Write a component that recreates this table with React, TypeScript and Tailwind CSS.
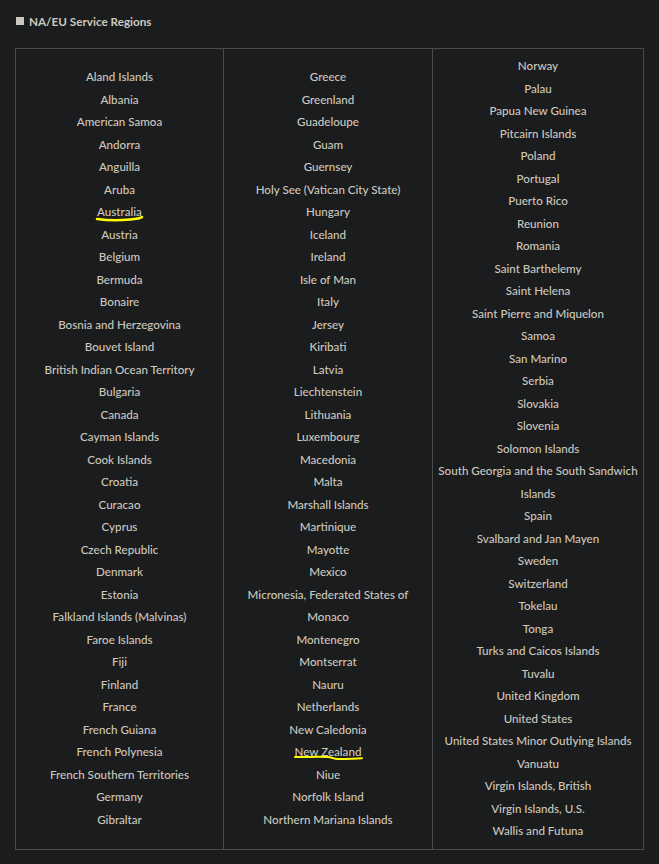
import React from "react";

const col1 = [
  "Aland Islands","Albania","American Samoa","Andorra","Anguilla","Aruba","Australia","Austria","Belgium","Bermuda","Bonaire","Bosnia and Herzegovina","Bouvet Island","British Indian Ocean Territory","Bulgaria","Canada","Cayman Islands","Cook Islands","Croatia","Curacao","Cyprus","Czech Republic","Denmark","Estonia","Falkland Islands (Malvinas)","Faroe Islands","Fiji","Finland","France","French Guiana","French Polynesia","French Southern Territories","Germany","Gibraltar",
];
const col2 = [
  "Greece","Greenland","Guadeloupe","Guam","Guernsey","Holy See (Vatican City State)","Hungary","Iceland","Ireland","Isle of Man","Italy","Jersey","Kiribati","Latvia","Liechtenstein","Lithuania","Luxembourg","Macedonia","Malta","Marshall Islands","Martinique","Mayotte","Mexico","Micronesia, Federated States of Monaco","Montenegro","Montserrat","Nauru","Netherlands","New Caledonia","New Zealand","Niue","Norfolk Island","Northern Mariana Islands",
];
const col3 = [
  "Norway","Palau","Papua New Guinea","Pitcairn Islands","Poland","Portugal","Puerto Rico","Reunion","Romania","Saint Barthelemy","Saint Helena","Saint Pierre and Miquelon","Samoa","San Marino","Serbia","Slovakia","Slovenia","Solomon Islands","South Georgia and the South Sandwich Islands","Spain","Svalbard and Jan Mayen","Sweden","Switzerland","Tokelau","Tonga","Turks and Caicos Islands","Tuvalu","United Kingdom","United States","United States Minor Outlying Islands","Vanuatu","Virgin Islands, British","Virgin Islands, U.S.","Wallis and Futuna",
];

function Item({ name }: { name: string }) {
  if (name === "Australia") {
    return (
      <div className="flex justify-center">
        <span className="relative">
          {name}
          <svg className="absolute left-[-1px] top-[15px] overflow-visible" width="50" height="6" viewBox="0 0 50 6">
            <path d="M1 3 C 12 4.5, 24 4.5, 34 3.5 C 40 3, 44 2.5, 46 1" stroke="#ffff00" strokeWidth="2.6" fill="none" strokeLinecap="round" />
          </svg>
        </span>
      </div>
    );
  }
  if (name === "New Zealand") {
    return (
      <div className="flex justify-center">
        <span className="relative">
          {name}
          <svg className="absolute left-[-1px] top-[14px] overflow-visible" width="72" height="6" viewBox="0 0 72 6">
            <path d="M1 2 C 14 2, 28 1.5, 34 2 C 38 2.5, 40 4, 44 4 C 54 4, 62 3.8, 68 3.2" stroke="#ffff00" strokeWidth="2" fill="none" strokeLinecap="round" />
          </svg>
        </span>
      </div>
    );
  }
  return <div>{name}</div>;
}

function Column({ items, className }: { items: string[]; className: string }) {
  return (
    <div className={`flex flex-col justify-center py-[6px] text-center ${className}`}>
      {items.map((n) => (
        <Item key={n} name={n} />
      ))}
    </div>
  );
}

export default function App() {
  return (
    <div
      className="min-h-screen bg-[#1b1c1e] text-[#cdc8bd] pt-[12px]"
      style={{ fontFamily: "'Lato', 'Open Sans', sans-serif" }}
    >
      <div className="flex items-center pl-[16px] h-[18px]">
        <div className="w-[8px] h-[8px] bg-[#cdc8bd]" />
        <div className="ml-[5px] text-[11.7px] font-bold leading-[18px]">NA/EU Service Regions</div>
      </div>
      <div className="ml-[15px] mt-[18px] w-[629px] border border-[#4a4b4c] grid grid-cols-[208px_209px_210px] text-[11.6px] leading-[22.5px] font-medium">
        <Column items={col1} className="px-[6px] border-r border-[#4a4b4c]" />
        <Column items={col2} className="px-[6px] border-r border-[#4a4b4c]" />
        <Column items={col3} className="px-[2px]" />
      </div>
    </div>
  );
}
